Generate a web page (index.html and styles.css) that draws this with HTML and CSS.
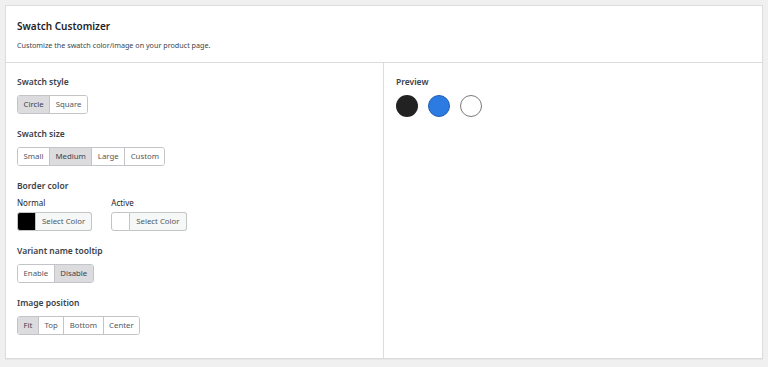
FILE: index.html
```html
<!DOCTYPE html>
<html lang="en">
  <head>
    <meta charset="UTF-8" />
    <meta name="viewport" content="width=device-width, initial-scale=1.0" />
    <title>Swatch Customizer</title>
    <link rel="stylesheet" href="styles.css">
  </head>
  <body>
    <!-- settings card -->
    <div class="card">
      <div class="card-header">
        <h2 class="card-title">Swatch Customizer</h2>
        <p class="card-desc">Customize the swatch color/image on your product page.</p>
      </div>

      <div class="card-body">
        <!-- left: options -->
        <div class="options">
          <div class="field">
            <div class="field-label">Swatch style</div>
            <div class="btn-group">
              <span class="seg active">Circle</span>
              <span class="seg">Square</span>
            </div>
          </div>

          <div class="field">
            <div class="field-label">Swatch size</div>
            <div class="btn-group">
              <span class="seg">Small</span>
              <span class="seg active">Medium</span>
              <span class="seg">Large</span>
              <span class="seg">Custom</span>
            </div>
          </div>

          <div class="field">
            <div class="field-label">Border color</div>
            <div class="color-row">
              <div class="color-col">
                <div class="sub-label">Normal</div>
                <div class="color-pick">
                  <span class="color-swatch swatch-black"></span>
                  <span class="color-btn">Select Color</span>
                </div>
              </div>
              <div class="color-col">
                <div class="sub-label">Active</div>
                <div class="color-pick">
                  <span class="color-swatch swatch-white"></span>
                  <span class="color-btn">Select Color</span>
                </div>
              </div>
            </div>
          </div>

          <div class="field">
            <div class="field-label">Variant name tooltip</div>
            <div class="btn-group">
              <span class="seg">Enable</span>
              <span class="seg active">Disable</span>
            </div>
          </div>

          <div class="field">
            <div class="field-label">Image position</div>
            <div class="btn-group">
              <span class="seg active">Fit</span>
              <span class="seg">Top</span>
              <span class="seg">Bottom</span>
              <span class="seg">Center</span>
            </div>
          </div>
        </div>

        <!-- right: preview -->
        <div class="preview">
          <div class="field-label">Preview</div>
          <div class="preview-swatches">
            <span class="dot dot-black"></span>
            <span class="dot dot-blue"></span>
            <span class="dot dot-white"></span>
          </div>
        </div>
      </div>
    </div>
  </body>
</html>
```

FILE: styles.css
```css
/* page */
body {
  margin: 0;
  padding: 5px;
  background-color: #f0f0f1;
  font-family: "Noto Sans", "Open Sans", sans-serif;
  color: #3c434a;
}

/* card */
.card {
  box-sizing: border-box;
  height: 354px;
  background-color: #fff;
  border: 1px solid #dcdcde;
  box-shadow: 0 1px 1px rgba(0, 0, 0, 0.04);
  display: flex;
  flex-direction: column;
  overflow: hidden;
}

.card-header {
  padding: 13px 11px 11px;
  border-bottom: 1px solid #dcdcde;
}

.card-title {
  margin: 0;
  font-size: 10px;
  line-height: 14px;
  font-weight: 600;
  color: #1d2327;
}

.card-desc {
  margin: 7px 0 0;
  font-size: 7.2px;
  line-height: 11px;
  color: #3c434a;
}

.card-body {
  flex: 1;
  min-height: 0;
  display: grid;
  grid-template-columns: 1fr 1fr;
}

/* left column */
.options {
  padding: 13px 11px 0;
  border-right: 1px solid #dcdcde;
}

.field {
  display: flex;
  flex-direction: column;
  align-items: flex-start;
  margin-bottom: 14px;
}

.field-label {
  font-size: 8.5px;
  line-height: 12px;
  font-weight: 600;
  color: #3c434a;
  margin-bottom: 7px;
}

/* segmented buttons */
.btn-group {
  display: flex;
  border: 1px solid #c3c4c7;
  border-radius: 3px;
  overflow: hidden;
}

.seg {
  padding: 0 5.5px;
  font-size: 7.8px;
  line-height: 17px;
  color: #50575e;
  background-color: #fff;
}

.seg + .seg {
  border-left: 1px solid #c3c4c7;
}

.seg.active {
  background-color: #dcdcde;
  color: #3c434a;
}

/* color pickers */
.color-row {
  display: flex;
  gap: 19px;
  margin-top: -2px;
}

.sub-label {
  font-size: 8px;
  line-height: 11px;
  color: #1d2327;
  margin-bottom: 4px;
}

.color-pick {
  display: flex;
}

.color-swatch {
  box-sizing: border-box;
  width: 19px;
  height: 19px;
  border: 1px solid #c3c4c7;
  border-radius: 3px 0 0 3px;
}

.swatch-black {
  background-color: #000;
}

.swatch-white {
  background-color: #fff;
}

.color-btn {
  padding: 0 6px;
  font-size: 7.8px;
  line-height: 17px;
  color: #50575e;
  background-color: #f6f7f7;
  border: 1px solid #c3c4c7;
  border-left: none;
  border-radius: 0 3px 3px 0;
}

/* right column */
.preview {
  padding: 13px 12px 0;
}

.preview-swatches {
  display: flex;
  gap: 10px;
}

.dot {
  box-sizing: border-box;
  width: 22px;
  height: 22px;
  border-radius: 50%;
}

.dot-black {
  background-color: #222;
}

.dot-blue {
  background-color: #2c7be2;
  border: 1px solid #1f5fb4;
}

.dot-white {
  background-color: #fff;
  border: 1px solid #7a7a7a;
}
```
